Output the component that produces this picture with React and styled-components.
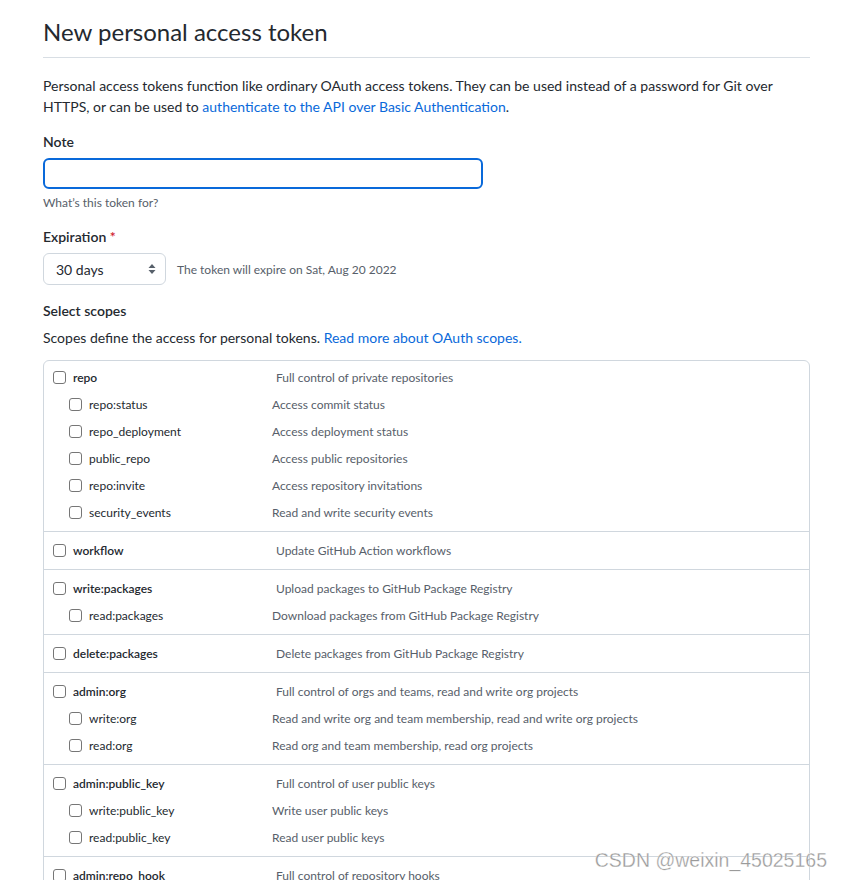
import React from "react";
import styled, { createGlobalStyle } from "styled-components";

const GlobalStyle = createGlobalStyle`
  body {
    margin: 0;
    background: #ffffff;
    font-family: Lato, "Noto Sans", sans-serif;
    color: #24292f;
    font-size: 14px;
  }
`;

const Screen = styled.div`
  position: relative;
  width: 843px;
  height: 880px;
  overflow: hidden;
`;

const Page = styled.div`
  width: 767px;
  padding: 15px 0 0 43px;
`;

const Title = styled.h1`
  margin: 0;
  font-size: 24px;
  font-weight: 400;
  line-height: 34px;
  padding-bottom: 8px;
  border-bottom: 1px solid #d8dee4;
`;

const Intro = styled.p`
  margin: 17px 0 0;
  line-height: 21px;
`;

const Link = styled.a`
  color: #0969da;
  text-decoration: none;
`;

const Field = styled.div`
  margin-top: ${(p) => p.top || 15}px;
`;

const Label = styled.div`
  font-weight: 600;
  line-height: 20px;
`;

const Required = styled.span`
  color: #cf222e;
`;

const TextInput = styled.input`
  display: block;
  box-sizing: border-box;
  width: 440px;
  height: 31px;
  margin-top: 6px;
  border: 2px solid #0969da;
  border-radius: 6px;
  outline: none;
  font: inherit;
`;

const Hint = styled.div`
  font-size: 12px;
  color: #57606a;
  margin-top: 5px;
  line-height: 18px;
`;

const SelectRow = styled.div`
  display: flex;
  align-items: center;
  gap: 11px;
  margin-top: 6px;
`;

const Select = styled.div`
  box-sizing: border-box;
  width: 123px;
  height: 32px;
  border: 1px solid #d0d7de;
  border-radius: 6px;
  display: flex;
  align-items: center;
  justify-content: space-between;
  padding: 0 9px 0 12px;
`;

const Note = styled.span`
  font-size: 12px;
  color: #57606a;
`;

const Desc = styled.p`
  margin: 6px 0 0;
  line-height: 21px;
`;

const ScopeBox = styled.div`
  margin-top: 12px;
  border: 1px solid #d0d7de;
  border-radius: 6px;
`;

const Group = styled.div`
  padding: ${(p) => (p.first ? 3 : 5)}px 0 5px 9px;
  border-top: ${(p) => (p.first ? "none" : "1px solid #d0d7de")};
`;

const Row = styled.div`
  display: flex;
  align-items: center;
  height: 27px;
  padding-left: ${(p) => (p.child ? 16 : 0)}px;
`;

const Box = styled.span`
  box-sizing: border-box;
  width: 13px;
  height: 13px;
  border: 1px solid #767676;
  border-radius: 3px;
  flex-shrink: 0;
  margin-right: 7px;
`;

const Name = styled.span`
  width: ${(p) => (p.child ? 183 : 203)}px;
  font-size: 12px;
  font-weight: ${(p) => (p.child ? 400 : 600)};
`;

const Info = styled.span`
  font-size: 12px;
  color: #57606a;
`;

const Watermark = styled.div`
  position: absolute;
  right: 16px;
  bottom: 8px;
  font-family: "Liberation Sans", Arial, sans-serif;
  font-size: 19.5px;
  color: #9a9a9a;
  -webkit-text-stroke: 0.3px #ffffff;
`;

const groups = [
  ["repo", "Full control of private repositories", [
    ["repo:status", "Access commit status"],
    ["repo_deployment", "Access deployment status"],
    ["public_repo", "Access public repositories"],
    ["repo:invite", "Access repository invitations"],
    ["security_events", "Read and write security events"],
  ]],
  ["workflow", "Update GitHub Action workflows", []],
  ["write:packages", "Upload packages to GitHub Package Registry", [
    ["read:packages", "Download packages from GitHub Package Registry"],
  ]],
  ["delete:packages", "Delete packages from GitHub Package Registry", []],
  ["admin:org", "Full control of orgs and teams, read and write org projects", [
    ["write:org", "Read and write org and team membership, read and write org projects"],
    ["read:org", "Read org and team membership, read org projects"],
  ]],
  ["admin:public_key", "Full control of user public keys", [
    ["write:public_key", "Write user public keys"],
    ["read:public_key", "Read user public keys"],
  ]],
  ["admin:repo_hook", "Full control of repository hooks", [
    ["write:repo_hook", "Write repository hooks"],
    ["read:repo_hook", "Read repository hooks"],
  ]],
];

function Arrows() {
  return (
    <svg width="8" height="14" viewBox="0 0 8 14">
      <path d="M4 2 L7.5 6 H0.5 Z M4 12 L0.5 8 H7.5 Z" fill="#57606a" />
    </svg>
  );
}

export default function App() {
  return (
    <Screen>
      <GlobalStyle />
      <Page>
        <Title>New personal access token</Title>
        <Intro>
          Personal access tokens function like ordinary OAuth access tokens. They can be used instead of a password for Git over
          HTTPS, or can be used to <Link href="#">authenticate to the API over Basic Authentication</Link>.
        </Intro>
        <Field top={15}>
          <Label>Note</Label>
          <TextInput />
          <Hint>What’s this token for?</Hint>
        </Field>
        <Field top={15}>
          <Label>
            Expiration <Required>*</Required>
          </Label>
          <SelectRow>
            <Select>
              30 days <Arrows />
            </Select>
            <Note>The token will expire on Sat, Aug 20 2022</Note>
          </SelectRow>
        </Field>
        <Field top={16}>
          <Label>Select scopes</Label>
          <Desc>
            Scopes define the access for personal tokens. <Link href="#">Read more about OAuth scopes.</Link>
          </Desc>
        </Field>
        <ScopeBox>
          {groups.map(([name, info, children], i) => (
            <Group key={name} first={i === 0}>
              <Row>
                <Box />
                <Name>{name}</Name>
                <Info>{info}</Info>
              </Row>
              {children.map(([n, d]) => (
                <Row child key={n}>
                  <Box />
                  <Name child>{n}</Name>
                  <Info>{d}</Info>
                </Row>
              ))}
            </Group>
          ))}
        </ScopeBox>
      </Page>
      <Watermark>CSDN @weixin_45025165</Watermark>
    </Screen>
  );
}
